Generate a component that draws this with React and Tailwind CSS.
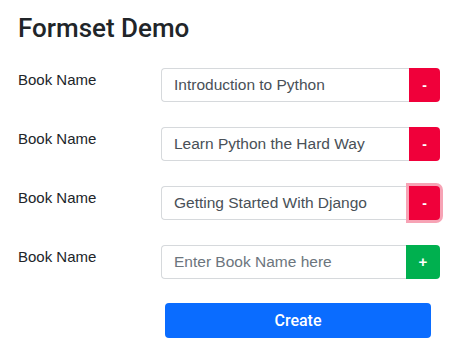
import React, { useState } from 'react';

const books = [
  'Introduction to Python',
  'Learn Python the Hard Way',
  'Getting Started With Django',
];

const App = () => {
  const [names, setNames] = useState(books);
  const [draft, setDraft] = useState('');

  return (
    <div className="min-h-screen w-[474px] bg-white pl-[18px] pt-[13px] text-[#212529]" style={{ fontFamily: '"Liberation Sans", Arial, sans-serif' }}>
      <h1 className="text-[26px] font-medium leading-[30px] mb-[25px]" style={{ fontFamily: 'Roboto, "Liberation Sans", sans-serif' }}>
        Formset Demo
      </h1>

      <div className="flex flex-col gap-[25px]">
        {names.map((name, i) => (
          <div key={i} className="flex items-start">
            <label className="w-[143px] text-[15px] leading-[22px] pt-[1px]">Book Name</label>
            <div className="flex w-[279px] h-[34px]">
              <input
                value={name}
                onChange={(e) => setNames(names.map((n, j) => (j === i ? e.target.value : n)))}
                className="flex-1 min-w-0 border border-[#d6d9dc] border-r-0 rounded-l-[4px] pl-[12px] text-[15.5px] text-[#495057] outline-none"
              />
              <button
                onClick={() => setNames(names.filter((_, j) => j !== i))}
                className={`w-[31px] bg-[#f0003a] text-white text-[14px] font-bold rounded-r-[4px] ${i === 2 ? 'ring-[3px] ring-[#f7a3b5]' : ''}`}
              >
                -
              </button>
            </div>
          </div>
        ))}

        <div className="flex items-start">
          <label className="w-[143px] text-[15px] leading-[22px] pt-[1px]">Book Name</label>
          <div className="flex w-[279px] h-[34px]">
            <input
              value={draft}
              onChange={(e) => setDraft(e.target.value)}
              placeholder="Enter Book Name here"
              className="flex-1 min-w-0 border border-[#d6d9dc] border-r-0 rounded-l-[4px] pl-[12px] text-[15.5px] text-[#495057] placeholder:text-[#6c757d] outline-none"
            />
            <button
              onClick={() => { if (draft) { setNames([...names, draft]); setDraft(''); } }}
              className="w-[34px] bg-[#00b04f] text-white text-[15px] font-bold rounded-r-[4px]"
            >
              +
            </button>
          </div>
        </div>
      </div>

      <div className="pl-[147px] mt-[24px]">
        <button className="w-[266px] h-[35px] bg-[#0a6cff] text-white text-[16px] font-medium rounded-[4px]" style={{ fontFamily: 'Roboto, "Liberation Sans", sans-serif' }}>
          Create
        </button>
      </div>
    </div>
  );
};

export default App;
